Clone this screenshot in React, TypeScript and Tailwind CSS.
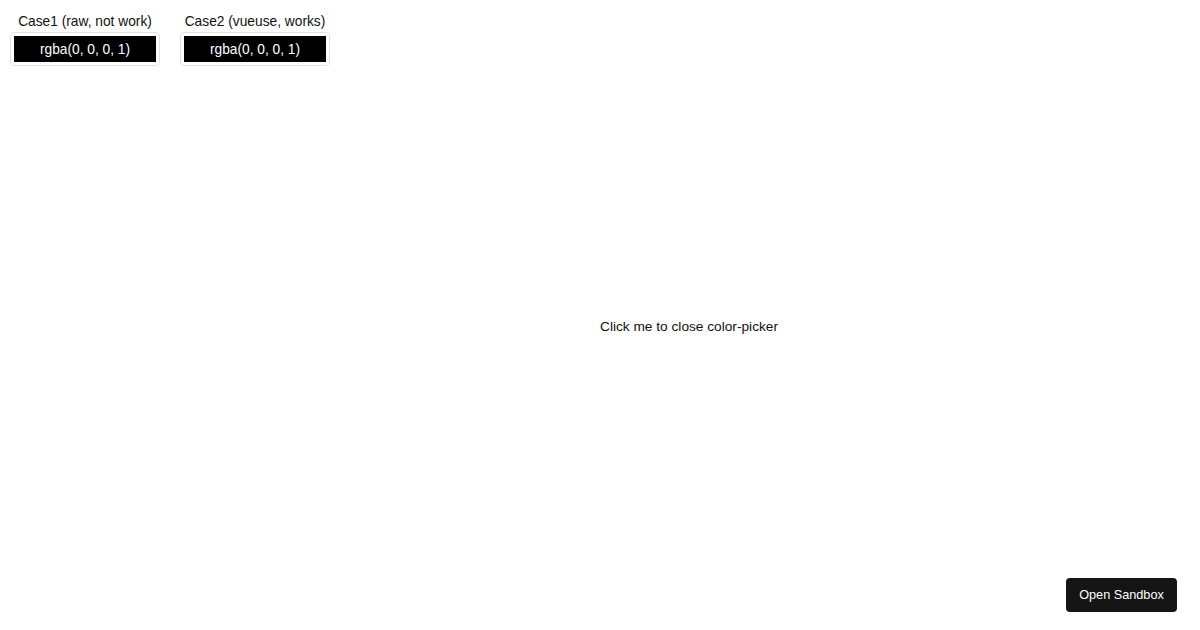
import React from "react";

function Case({ label }: { label: string }) {
  return (
    <div className="flex w-[150px] flex-col items-center">
      <div className="h-[21px] text-[13.75px] leading-[21px] text-[#111] whitespace-nowrap">{label}</div>
      <div className="w-[150px] rounded-[4px] border border-[#e3e3e3] bg-white p-[3px]">
        <div className="flex h-[26px] items-center justify-center bg-black pt-[2px] text-[13.75px] text-white">
          rgba(0, 0, 0, 1)
        </div>
      </div>
    </div>
  );
}

export default function App() {
  return (
    <div
      className="relative h-[630px] w-full overflow-hidden bg-white"
      style={{ fontFamily: '"Liberation Sans", Arial, sans-serif' }}
    >
      <div className="absolute inset-0 pl-[600px] pt-[316px] text-[13.7px] leading-[21px] text-[#111]">
        Click me to close color-picker
      </div>
      <div className="relative flex gap-[20px] pl-[10px] pt-[11px]">
        <Case label="Case1 (raw, not work)" />
        <Case label="Case2 (vueuse, works)" />
      </div>
      <button className="absolute bottom-[18px] right-[23px] flex h-[34px] w-[111px] items-center justify-center rounded-[4px] bg-[#151515] pt-[2px] text-[12.7px] text-white">
        Open Sandbox
      </button>
    </div>
  );
}
